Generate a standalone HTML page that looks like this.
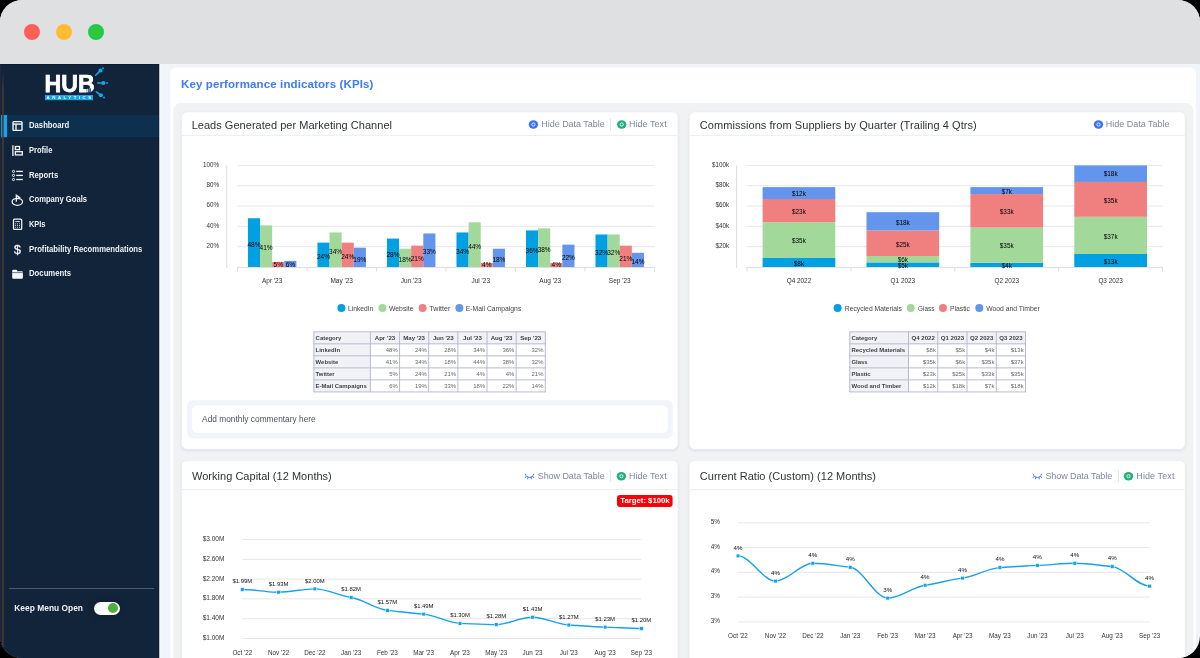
<!DOCTYPE html>
<html><head><meta charset="utf-8"><title>KPI Dashboard</title>
<style>
html,body{margin:0;padding:0}
body{width:1200px;height:658px;background:#000;overflow:hidden;position:relative;font-family:"Liberation Sans",sans-serif}
#win{will-change:transform;position:absolute;left:0;top:0;width:1200px;height:658px;border-radius:22px;overflow:hidden;background:#f1f4f8}
#win div{box-sizing:border-box}
.abs{position:absolute}
.card{position:absolute;background:#fff;border-radius:5.5px;box-shadow:0 0 0 0.6px rgba(30,40,80,.07),0 1px 2px rgba(16,24,40,.07),0 2px 5px rgba(16,24,40,.03)}
.hline{position:absolute;height:1px;background:#eceef1}
svg text{font-family:"Liberation Sans",sans-serif}
table.dt{position:absolute;border-collapse:collapse;table-layout:fixed;font-size:5.6px;color:#555}
table.dt td{border:1px solid #b9bdd3;padding:0 1.6px;height:11px;line-height:10px;text-align:right;overflow:hidden;white-space:nowrap;background:#fff}
table.dt td.h{background:#f1f2f5;font-weight:700;color:#444;text-align:center}
table.dt td.c{background:#f1f2f5;font-weight:700;color:#444;text-align:left}
</style></head><body><div id="win">

<div class="abs" style="left:0;top:0;width:1200px;height:64px;background:#dfe0e2"></div>
<div class="abs" style="left:24px;top:24px;width:16px;height:16px;border-radius:50%;background:#ff5f57"></div>
<div class="abs" style="left:56px;top:24px;width:16px;height:16px;border-radius:50%;background:#febc2e"></div>
<div class="abs" style="left:88px;top:24px;width:16px;height:16px;border-radius:50%;background:#28c840"></div>
<svg class="abs" style="left:0;top:0" width="1200" height="658" viewBox="0 0 1200 658"><rect x="0" y="64" width="159.5" height="600" fill="#07182a"/><rect x="0" y="64.5" width="158.7" height="600" fill="#11243a"/><rect x="159.5" y="64" width="0.8" height="600" fill="#fbfcfd"/><rect x="0" y="115" width="158.7" height="22.2" fill="#0d304e"/><rect x="0.5" y="115" width="6.5" height="22.2" fill="#12a5ea"/><rect x="0" y="64" width="1.1" height="600" fill="#1b2a3a"/><defs><linearGradient id="bl" x1="0" y1="0" x2="0" y2="1"><stop offset="0" stop-color="#11243a"/><stop offset="0.035" stop-color="#463a33"/><stop offset="1" stop-color="#463a33"/></linearGradient><filter id="sh" x="-5%" y="-5%" width="110%" height="115%"><feDropShadow dx="0" dy="1.2" stdDeviation="1.3" flood-color="#1a2238" flood-opacity="0.10"/></filter></defs><rect x="2.1" y="70" width="1.6" height="590" fill="url(#bl)"/><rect x="170.4" y="67.6" width="1025.6" height="640" rx="6" fill="#fff"/><rect x="173.3" y="103" width="1020.1" height="640" rx="7.5" fill="#f1f2f4"/><rect x="181.4" y="111.8" width="496.6" height="337.4" rx="5.5" fill="#fff" stroke="#e4e6ec" stroke-width="0.5" filter="url(#sh)"/><line x1="181.4" x2="678.0" y1="135.4" y2="135.4" stroke="#eceef1" stroke-width="1"/><rect x="689.2" y="111.8" width="495.9" height="337.4" rx="5.5" fill="#fff" stroke="#e4e6ec" stroke-width="0.5" filter="url(#sh)"/><line x1="689.2" x2="1185.1" y1="135.4" y2="135.4" stroke="#eceef1" stroke-width="1"/><rect x="181.4" y="460.5" width="496.6" height="230" rx="5.5" fill="#fff" stroke="#e4e6ec" stroke-width="0.5" filter="url(#sh)"/><line x1="181.4" x2="678.0" y1="489.5" y2="489.5" stroke="#eceef1" stroke-width="1"/><rect x="689.2" y="460.5" width="495.9" height="230" rx="5.5" fill="#fff" stroke="#e4e6ec" stroke-width="0.5" filter="url(#sh)"/><line x1="689.2" x2="1185.1" y1="489.5" y2="489.5" stroke="#eceef1" stroke-width="1"/><rect x="617" y="495" width="55.6" height="12" rx="3" fill="#fb0007"/><rect x="187" y="400.2" width="485.8" height="38.3" rx="6" fill="#f1f5f9"/><rect x="192" y="405.6" width="475.8" height="27.4" rx="5" fill="#fff"/></svg>
<div style="position:absolute;left:28.70px;top:119.28px;font-size:8.6px;line-height:12.04px;color:#eef2f6;font-weight:700;letter-spacing:0.000px;white-space:nowrap;transform:scaleX(0.8972);transform-origin:0 50%;">Dashboard</div>
<div style="position:absolute;left:28.70px;top:143.93px;font-size:8.6px;line-height:12.04px;color:#eef2f6;font-weight:700;letter-spacing:0.000px;white-space:nowrap;transform:scaleX(0.8744);transform-origin:0 50%;">Profile</div>
<div style="position:absolute;left:28.70px;top:168.58px;font-size:8.6px;line-height:12.04px;color:#eef2f6;font-weight:700;letter-spacing:0.000px;white-space:nowrap;transform:scaleX(0.8986);transform-origin:0 50%;">Reports</div>
<div style="position:absolute;left:28.70px;top:193.23px;font-size:8.6px;line-height:12.04px;color:#eef2f6;font-weight:700;letter-spacing:0.000px;white-space:nowrap;transform:scaleX(0.8874);transform-origin:0 50%;">Company Goals</div>
<div style="position:absolute;left:28.70px;top:217.88px;font-size:8.6px;line-height:12.04px;color:#eef2f6;font-weight:700;letter-spacing:0.000px;white-space:nowrap;transform:scaleX(0.8630);transform-origin:0 50%;">KPIs</div>
<div style="position:absolute;left:28.70px;top:242.53px;font-size:8.6px;line-height:12.04px;color:#eef2f6;font-weight:700;letter-spacing:0.000px;white-space:nowrap;transform:scaleX(0.8955);transform-origin:0 50%;">Profitability Recommendations</div>
<div style="position:absolute;left:28.70px;top:267.18px;font-size:8.6px;line-height:12.04px;color:#eef2f6;font-weight:700;letter-spacing:0.000px;white-space:nowrap;transform:scaleX(0.9011);transform-origin:0 50%;">Documents</div>
<div class="abs" style="left:9px;top:587.6px;width:145px;height:1px;background:#4a5a6c"></div>
<div style="position:absolute;left:14.30px;top:603.12px;font-size:8.4px;line-height:11.76px;color:#eef2f6;font-weight:700;letter-spacing:0.021px;white-space:nowrap;">Keep Menu Open</div>
<div class="abs" style="left:93.9px;top:601.6px;width:26px;height:13.4px;border-radius:7px;background:#fff;box-shadow:0 0 6px rgba(0,0,0,.25)"></div>
<div class="abs" style="left:108.2px;top:603.3px;width:10px;height:10px;border-radius:50%;background:#4caf3d"></div>
<div style="position:absolute;left:181.00px;top:76.25px;font-size:11.5px;line-height:16.1px;color:#3c7cf5;font-weight:700;letter-spacing:0.120px;white-space:nowrap;">Key performance indicators (KPIs)</div>
<div style="position:absolute;left:191.70px;top:117.60px;font-size:11px;line-height:15.4px;color:#2f3237;font-weight:400;letter-spacing:0.026px;white-space:nowrap;">Leads Generated per Marketing Channel</div>
<div style="position:absolute;left:699.80px;top:117.60px;font-size:11px;line-height:15.4px;color:#2f3237;font-weight:400;letter-spacing:0.054px;white-space:nowrap;">Commissions from Suppliers by Quarter (Trailing 4 Qtrs)</div>
<div style="position:absolute;left:192.00px;top:468.70px;font-size:11px;line-height:15.4px;color:#2f3237;font-weight:400;letter-spacing:0.023px;white-space:nowrap;">Working Capital (12 Months)</div>
<div style="position:absolute;left:699.80px;top:468.70px;font-size:11px;line-height:15.4px;color:#2f3237;font-weight:400;letter-spacing:0.022px;white-space:nowrap;">Current Ratio (Custom) (12 Months)</div>
<div style="position:absolute;left:541.30px;top:118.10px;font-size:9px;line-height:12.6px;color:#80879c;font-weight:400;letter-spacing:-0.032px;white-space:nowrap;">Hide Data Table</div>
<div class="abs" style="left:610.1px;top:118.2px;width:1px;height:12.4px;background:#e4e6ea"></div>
<div style="position:absolute;left:629.00px;top:118.10px;font-size:9px;line-height:12.6px;color:#80879c;font-weight:400;letter-spacing:0.038px;white-space:nowrap;">Hide Text</div>
<div style="position:absolute;left:1105.80px;top:118.10px;font-size:9px;line-height:12.6px;color:#80879c;font-weight:400;letter-spacing:-0.018px;white-space:nowrap;">Hide Data Table</div>
<div style="position:absolute;left:537.70px;top:469.70px;font-size:9px;line-height:12.6px;color:#80879c;font-weight:400;letter-spacing:-0.065px;white-space:nowrap;">Show Data Table</div>
<div class="abs" style="left:609.9px;top:469.8px;width:1px;height:12.4px;background:#e4e6ea"></div>
<div style="position:absolute;left:628.90px;top:469.70px;font-size:9px;line-height:12.6px;color:#80879c;font-weight:400;letter-spacing:0.050px;white-space:nowrap;">Hide Text</div>
<div style="position:absolute;left:1045.40px;top:469.70px;font-size:9px;line-height:12.6px;color:#80879c;font-weight:400;letter-spacing:-0.079px;white-space:nowrap;">Show Data Table</div>
<div class="abs" style="left:1117.6px;top:469.8px;width:1px;height:12.4px;background:#e4e6ea"></div>
<div style="position:absolute;left:1136.30px;top:469.70px;font-size:9px;line-height:12.6px;color:#80879c;font-weight:400;letter-spacing:0.094px;white-space:nowrap;">Hide Text</div>
<div style="position:absolute;left:620.30px;top:495.64px;font-size:7.8px;line-height:10.92px;color:#fff;font-weight:700;letter-spacing:-0.024px;white-space:nowrap;">Target: $100k</div>
<div style="position:absolute;left:202.10px;top:413.99px;font-size:8.3px;line-height:11.62px;color:#4a4f57;font-weight:400;letter-spacing:0.025px;white-space:nowrap;">Add monthly commentary here</div>
<svg class="abs" style="left:0;top:0" width="1200" height="658" viewBox="0 0 1200 658"><ellipse cx="533.4" cy="124.5" rx="4.7" ry="4.2" fill="#3b72f6"/><circle cx="533.4" cy="124.5" r="1.6" fill="none" stroke="#fff" stroke-width="0.85"/><ellipse cx="621.7" cy="124.5" rx="4.7" ry="4.2" fill="#21ae7b"/><circle cx="621.7" cy="124.5" r="1.6" fill="none" stroke="#fff" stroke-width="0.85"/><ellipse cx="1098.5" cy="124.5" rx="4.7" ry="4.2" fill="#3b72f6"/><circle cx="1098.5" cy="124.5" r="1.6" fill="none" stroke="#fff" stroke-width="0.85"/><g stroke="#3d74f7" stroke-width="0.95" fill="none" stroke-linecap="round"><path d="M525.30 474.20 C526.00 476.50 527.60 477.40 529.50 477.40 C531.40 477.40 533.00 476.50 533.70 474.20"/><path d="M526.30 476.40 l-1.1 1.3 M528.00 477.30 l-0.4 1.6 M531.00 477.30 l0.4 1.6 M532.70 476.40 l1.1 1.3"/></g><ellipse cx="621.4" cy="476.2" rx="4.7" ry="4.2" fill="#21ae7b"/><circle cx="621.4" cy="476.2" r="1.6" fill="none" stroke="#fff" stroke-width="0.85"/><g stroke="#3d74f7" stroke-width="0.95" fill="none" stroke-linecap="round"><path d="M1033.20 474.20 C1033.90 476.50 1035.50 477.40 1037.40 477.40 C1039.30 477.40 1040.90 476.50 1041.60 474.20"/><path d="M1034.20 476.40 l-1.1 1.3 M1035.90 477.30 l-0.4 1.6 M1038.90 477.30 l0.4 1.6 M1040.60 476.40 l1.1 1.3"/></g><ellipse cx="1128.5" cy="476.2" rx="4.7" ry="4.2" fill="#21ae7b"/><circle cx="1128.5" cy="476.2" r="1.6" fill="none" stroke="#fff" stroke-width="0.85"/><line x1="237.4" x2="654.5" y1="246.68" y2="246.68" stroke="#e7e7e7" stroke-width="1"/><text x="219.00" y="247.84" font-size="6.3" fill="#333" text-anchor="end">20%</text><line x1="237.4" x2="654.5" y1="226.36" y2="226.36" stroke="#e7e7e7" stroke-width="1"/><text x="219.00" y="227.52" font-size="6.3" fill="#333" text-anchor="end">40%</text><line x1="237.4" x2="654.5" y1="206.04" y2="206.04" stroke="#e7e7e7" stroke-width="1"/><text x="219.00" y="207.20" font-size="6.3" fill="#333" text-anchor="end">60%</text><line x1="237.4" x2="654.5" y1="185.72" y2="185.72" stroke="#e7e7e7" stroke-width="1"/><text x="219.00" y="186.88" font-size="6.3" fill="#333" text-anchor="end">80%</text><line x1="237.4" x2="654.5" y1="165.40" y2="165.40" stroke="#e7e7e7" stroke-width="1"/><text x="219.00" y="166.56" font-size="6.3" fill="#333" text-anchor="end">100%</text><line x1="226.8" x2="226.8" y1="165.4" y2="268.0" stroke="#dcdcdc" stroke-width="1"/><line x1="237.4" x2="654.5" y1="267.4" y2="267.4" stroke="#dcdcdc" stroke-width="1"/><line x1="237.40" x2="237.40" y1="267.0" y2="271.5" stroke="#dcdcdc" stroke-width="1"/><text x="272.16" y="283.03" font-size="6.5" fill="#333" text-anchor="middle">Apr '23</text><rect x="247.92" y="218.23" width="12.12" height="48.77" fill="#00a0e3"/><rect x="260.04" y="225.34" width="12.12" height="41.66" fill="#a2d99b"/><rect x="272.16" y="261.92" width="12.12" height="5.08" fill="#f08080"/><rect x="284.28" y="260.90" width="12.12" height="6.10" fill="#6495ed"/><line x1="306.92" x2="306.92" y1="267.0" y2="271.5" stroke="#dcdcdc" stroke-width="1"/><text x="341.68" y="283.03" font-size="6.5" fill="#333" text-anchor="middle">May '23</text><rect x="317.44" y="242.62" width="12.12" height="24.38" fill="#00a0e3"/><rect x="329.56" y="232.46" width="12.12" height="34.54" fill="#a2d99b"/><rect x="341.68" y="242.62" width="12.12" height="24.38" fill="#f08080"/><rect x="353.80" y="247.70" width="12.12" height="19.30" fill="#6495ed"/><line x1="376.43" x2="376.43" y1="267.0" y2="271.5" stroke="#dcdcdc" stroke-width="1"/><text x="411.19" y="283.03" font-size="6.5" fill="#333" text-anchor="middle">Jun '23</text><rect x="386.95" y="238.55" width="12.12" height="28.45" fill="#00a0e3"/><rect x="399.07" y="248.71" width="12.12" height="18.29" fill="#a2d99b"/><rect x="411.19" y="245.66" width="12.12" height="21.34" fill="#f08080"/><rect x="423.31" y="233.47" width="12.12" height="33.53" fill="#6495ed"/><line x1="445.95" x2="445.95" y1="267.0" y2="271.5" stroke="#dcdcdc" stroke-width="1"/><text x="480.71" y="283.03" font-size="6.5" fill="#333" text-anchor="middle">Jul '23</text><rect x="456.47" y="232.46" width="12.12" height="34.54" fill="#00a0e3"/><rect x="468.59" y="222.30" width="12.12" height="44.70" fill="#a2d99b"/><rect x="480.71" y="262.94" width="12.12" height="4.06" fill="#f08080"/><rect x="492.83" y="248.71" width="12.12" height="18.29" fill="#6495ed"/><line x1="515.47" x2="515.47" y1="267.0" y2="271.5" stroke="#dcdcdc" stroke-width="1"/><text x="550.23" y="283.03" font-size="6.5" fill="#333" text-anchor="middle">Aug '23</text><rect x="525.99" y="230.42" width="12.12" height="36.58" fill="#00a0e3"/><rect x="538.11" y="228.39" width="12.12" height="38.61" fill="#a2d99b"/><rect x="550.23" y="262.94" width="12.12" height="4.06" fill="#f08080"/><rect x="562.35" y="244.65" width="12.12" height="22.35" fill="#6495ed"/><line x1="584.98" x2="584.98" y1="267.0" y2="271.5" stroke="#dcdcdc" stroke-width="1"/><text x="619.74" y="283.03" font-size="6.5" fill="#333" text-anchor="middle">Sep '23</text><rect x="595.50" y="234.49" width="12.12" height="32.51" fill="#00a0e3"/><rect x="607.62" y="234.49" width="12.12" height="32.51" fill="#a2d99b"/><rect x="619.74" y="245.66" width="12.12" height="21.34" fill="#f08080"/><rect x="631.86" y="252.78" width="12.12" height="14.22" fill="#6495ed"/><text x="253.98" y="246.84" font-size="6.5" fill="#000" text-anchor="middle">48%</text><text x="266.10" y="250.40" font-size="6.5" fill="#000" text-anchor="middle">41%</text><text x="278.22" y="266.53" font-size="6.5" fill="#000" text-anchor="middle">5%</text><text x="290.34" y="266.53" font-size="6.5" fill="#000" text-anchor="middle">6%</text><text x="323.50" y="259.03" font-size="6.5" fill="#000" text-anchor="middle">24%</text><text x="335.62" y="253.96" font-size="6.5" fill="#000" text-anchor="middle">34%</text><text x="347.74" y="259.03" font-size="6.5" fill="#000" text-anchor="middle">24%</text><text x="359.86" y="261.57" font-size="6.5" fill="#000" text-anchor="middle">19%</text><text x="393.01" y="257.00" font-size="6.5" fill="#000" text-anchor="middle">28%</text><text x="405.13" y="262.08" font-size="6.5" fill="#000" text-anchor="middle">18%</text><text x="417.25" y="260.56" font-size="6.5" fill="#000" text-anchor="middle">21%</text><text x="429.37" y="254.46" font-size="6.5" fill="#000" text-anchor="middle">33%</text><text x="462.53" y="253.96" font-size="6.5" fill="#000" text-anchor="middle">34%</text><text x="474.65" y="248.88" font-size="6.5" fill="#000" text-anchor="middle">44%</text><text x="486.77" y="266.53" font-size="6.5" fill="#000" text-anchor="middle">4%</text><text x="498.89" y="262.08" font-size="6.5" fill="#000" text-anchor="middle">18%</text><text x="532.04" y="252.94" font-size="6.5" fill="#000" text-anchor="middle">36%</text><text x="544.16" y="251.92" font-size="6.5" fill="#000" text-anchor="middle">38%</text><text x="556.28" y="266.53" font-size="6.5" fill="#000" text-anchor="middle">4%</text><text x="568.40" y="260.05" font-size="6.5" fill="#000" text-anchor="middle">22%</text><text x="601.56" y="254.97" font-size="6.5" fill="#000" text-anchor="middle">32%</text><text x="613.68" y="254.97" font-size="6.5" fill="#000" text-anchor="middle">32%</text><text x="625.80" y="260.56" font-size="6.5" fill="#000" text-anchor="middle">21%</text><text x="637.92" y="264.11" font-size="6.5" fill="#000" text-anchor="middle">14%</text><line x1="654.5" x2="654.5" y1="267.0" y2="271.5" stroke="#dcdcdc" stroke-width="1"/><circle cx="341.4" cy="308.1" r="4" fill="#00a0e3"/><text x="348.00" y="310.60" font-size="6.7" fill="#444" text-anchor="start" textLength="25.30" lengthAdjust="spacingAndGlyphs">LinkedIn</text><circle cx="382.4" cy="308.1" r="4" fill="#a2d99b"/><text x="389.00" y="310.60" font-size="6.7" fill="#444" text-anchor="start" textLength="24.50" lengthAdjust="spacingAndGlyphs">Website</text><circle cx="422.6" cy="308.1" r="4" fill="#f08080"/><text x="429.30" y="310.60" font-size="6.7" fill="#444" text-anchor="start" textLength="21.00" lengthAdjust="spacingAndGlyphs">Twitter</text><circle cx="459.4" cy="308.1" r="4" fill="#6495ed"/><text x="465.80" y="310.60" font-size="6.7" fill="#444" text-anchor="start" textLength="55.50" lengthAdjust="spacingAndGlyphs">E-Mail Campaigns</text><line x1="747.0" x2="1162.6" y1="246.68" y2="246.68" stroke="#e7e7e7" stroke-width="1"/><text x="729.20" y="247.84" font-size="6.3" fill="#333" text-anchor="end">$20k</text><line x1="747.0" x2="1162.6" y1="226.36" y2="226.36" stroke="#e7e7e7" stroke-width="1"/><text x="729.20" y="227.52" font-size="6.3" fill="#333" text-anchor="end">$40k</text><line x1="747.0" x2="1162.6" y1="206.04" y2="206.04" stroke="#e7e7e7" stroke-width="1"/><text x="729.20" y="207.20" font-size="6.3" fill="#333" text-anchor="end">$60k</text><line x1="747.0" x2="1162.6" y1="185.72" y2="185.72" stroke="#e7e7e7" stroke-width="1"/><text x="729.20" y="186.88" font-size="6.3" fill="#333" text-anchor="end">$80k</text><line x1="747.0" x2="1162.6" y1="165.40" y2="165.40" stroke="#e7e7e7" stroke-width="1"/><text x="729.20" y="166.56" font-size="6.3" fill="#333" text-anchor="end">$100k</text><line x1="736.6" x2="736.6" y1="165.4" y2="268.0" stroke="#dcdcdc" stroke-width="1"/><line x1="747.0" x2="1162.6" y1="267.4" y2="267.4" stroke="#dcdcdc" stroke-width="1"/><line x1="747.00" x2="747.00" y1="267.0" y2="271.5" stroke="#dcdcdc" stroke-width="1"/><text x="798.95" y="282.99" font-size="6.4" fill="#333" text-anchor="middle">Q4 2022</text><rect x="762.60" y="258.00" width="72.70" height="9.00" fill="#00a0e3"/><rect x="762.60" y="222.30" width="72.70" height="35.70" fill="#a2d99b"/><rect x="762.60" y="199.00" width="72.70" height="23.30" fill="#f08080"/><rect x="762.60" y="187.10" width="72.70" height="11.90" fill="#6495ed"/><line x1="850.90" x2="850.90" y1="267.0" y2="271.5" stroke="#dcdcdc" stroke-width="1"/><text x="902.85" y="282.99" font-size="6.4" fill="#333" text-anchor="middle">Q1 2023</text><rect x="866.50" y="262.40" width="72.70" height="4.60" fill="#00a0e3"/><rect x="866.50" y="256.00" width="72.70" height="6.40" fill="#a2d99b"/><rect x="866.50" y="230.50" width="72.70" height="25.50" fill="#f08080"/><rect x="866.50" y="212.20" width="72.70" height="18.30" fill="#6495ed"/><line x1="954.80" x2="954.80" y1="267.0" y2="271.5" stroke="#dcdcdc" stroke-width="1"/><text x="1006.75" y="282.99" font-size="6.4" fill="#333" text-anchor="middle">Q2 2023</text><rect x="970.40" y="262.80" width="72.70" height="4.20" fill="#00a0e3"/><rect x="970.40" y="227.60" width="72.70" height="35.20" fill="#a2d99b"/><rect x="970.40" y="194.05" width="72.70" height="33.55" fill="#f08080"/><rect x="970.40" y="187.10" width="72.70" height="6.95" fill="#6495ed"/><line x1="1058.70" x2="1058.70" y1="267.0" y2="271.5" stroke="#dcdcdc" stroke-width="1"/><text x="1110.65" y="282.99" font-size="6.4" fill="#333" text-anchor="middle">Q3 2023</text><rect x="1074.30" y="254.00" width="72.70" height="13.00" fill="#00a0e3"/><rect x="1074.30" y="216.80" width="72.70" height="37.20" fill="#a2d99b"/><rect x="1074.30" y="181.95" width="72.70" height="34.85" fill="#f08080"/><rect x="1074.30" y="165.40" width="72.70" height="16.55" fill="#6495ed"/><line x1="1162.6" x2="1162.6" y1="267.0" y2="271.5" stroke="#dcdcdc" stroke-width="1"/><text x="798.95" y="265.79" font-size="6.4" fill="#000" text-anchor="middle">$8k</text><text x="798.95" y="243.44" font-size="6.4" fill="#000" text-anchor="middle">$35k</text><text x="798.95" y="213.94" font-size="6.4" fill="#000" text-anchor="middle">$23k</text><text x="798.95" y="196.34" font-size="6.4" fill="#000" text-anchor="middle">$12k</text><text x="902.85" y="267.99" font-size="6.4" fill="#000" text-anchor="middle">$5k</text><text x="902.85" y="262.49" font-size="6.4" fill="#000" text-anchor="middle">$6k</text><text x="902.85" y="246.54" font-size="6.4" fill="#000" text-anchor="middle">$25k</text><text x="902.85" y="224.64" font-size="6.4" fill="#000" text-anchor="middle">$18k</text><text x="1006.75" y="268.19" font-size="6.4" fill="#000" text-anchor="middle">$4k</text><text x="1006.75" y="248.49" font-size="6.4" fill="#000" text-anchor="middle">$35k</text><text x="1006.75" y="214.12" font-size="6.4" fill="#000" text-anchor="middle">$33k</text><text x="1006.75" y="193.87" font-size="6.4" fill="#000" text-anchor="middle">$7k</text><text x="1110.65" y="263.79" font-size="6.4" fill="#000" text-anchor="middle">$13k</text><text x="1110.65" y="238.69" font-size="6.4" fill="#000" text-anchor="middle">$37k</text><text x="1110.65" y="202.67" font-size="6.4" fill="#000" text-anchor="middle">$35k</text><text x="1110.65" y="176.07" font-size="6.4" fill="#000" text-anchor="middle">$18k</text><circle cx="837.6" cy="308.1" r="4" fill="#00a0e3"/><text x="844.80" y="310.60" font-size="6.7" fill="#444" text-anchor="start" textLength="57.20" lengthAdjust="spacingAndGlyphs">Recycled Materials</text><circle cx="910.8" cy="308.1" r="4" fill="#a2d99b"/><text x="918.00" y="310.60" font-size="6.7" fill="#444" text-anchor="start" textLength="16.40" lengthAdjust="spacingAndGlyphs">Glass</text><circle cx="943" cy="308.1" r="4" fill="#f08080"/><text x="950.00" y="310.60" font-size="6.7" fill="#444" text-anchor="start" textLength="19.90" lengthAdjust="spacingAndGlyphs">Plastic</text><circle cx="979.3" cy="308.1" r="4" fill="#6495ed"/><text x="986.20" y="310.60" font-size="6.7" fill="#444" text-anchor="start" textLength="53.60" lengthAdjust="spacingAndGlyphs">Wood and Timber</text><line x1="242.3" x2="641.4" y1="539.50" y2="539.50" stroke="#e7e7e7" stroke-width="1"/><text x="224.40" y="540.93" font-size="6.5" fill="#333" text-anchor="end">$3.00M</text><line x1="242.3" x2="641.4" y1="559.30" y2="559.30" stroke="#e7e7e7" stroke-width="1"/><text x="224.40" y="560.73" font-size="6.5" fill="#333" text-anchor="end">$2.60M</text><line x1="242.3" x2="641.4" y1="579.10" y2="579.10" stroke="#e7e7e7" stroke-width="1"/><text x="224.40" y="580.53" font-size="6.5" fill="#333" text-anchor="end">$2.20M</text><line x1="242.3" x2="641.4" y1="598.90" y2="598.90" stroke="#e7e7e7" stroke-width="1"/><text x="224.40" y="600.33" font-size="6.5" fill="#333" text-anchor="end">$1.80M</text><line x1="242.3" x2="641.4" y1="618.70" y2="618.70" stroke="#e7e7e7" stroke-width="1"/><text x="224.40" y="620.13" font-size="6.5" fill="#333" text-anchor="end">$1.40M</text><line x1="242.3" x2="641.4" y1="638.50" y2="638.50" stroke="#e7e7e7" stroke-width="1"/><text x="224.40" y="639.93" font-size="6.5" fill="#333" text-anchor="end">$1.00M</text><path d="M242.30 589.50 C254.39 589.50 266.49 592.20 278.58 592.20 C290.68 592.20 302.77 588.90 314.86 588.90 C326.96 588.90 339.05 595.71 351.15 597.50 C363.24 599.29 375.33 609.17 387.43 610.40 C399.52 611.63 411.62 613.02 423.71 614.10 C435.80 615.18 447.90 623.00 459.99 623.40 C472.08 623.80 484.18 624.60 496.27 624.60 C508.37 624.60 520.46 617.20 532.55 617.20 C544.65 617.20 556.74 624.30 568.84 625.00 C580.93 625.70 593.02 626.80 605.12 627.10 C617.21 627.40 629.31 628.60 641.40 628.60" fill="none" stroke="#18a2e6" stroke-width="1.4"/><rect x="240.45" y="587.65" width="3.7" height="3.7" fill="#18a2e6" stroke="#fff" stroke-width="0.5"/><text x="242.30" y="583.31" font-size="5.9" fill="#111" text-anchor="middle">$1.99M</text><text x="242.30" y="654.76" font-size="6.3" fill="#333" text-anchor="middle">Oct '22</text><rect x="276.73" y="590.35" width="3.7" height="3.7" fill="#18a2e6" stroke="#fff" stroke-width="0.5"/><text x="278.58" y="586.01" font-size="5.9" fill="#111" text-anchor="middle">$1.93M</text><text x="278.58" y="654.76" font-size="6.3" fill="#333" text-anchor="middle">Nov '22</text><rect x="313.01" y="587.05" width="3.7" height="3.7" fill="#18a2e6" stroke="#fff" stroke-width="0.5"/><text x="314.86" y="582.71" font-size="5.9" fill="#111" text-anchor="middle">$2.00M</text><text x="314.86" y="654.76" font-size="6.3" fill="#333" text-anchor="middle">Dec '22</text><rect x="349.30" y="595.65" width="3.7" height="3.7" fill="#18a2e6" stroke="#fff" stroke-width="0.5"/><text x="351.15" y="591.31" font-size="5.9" fill="#111" text-anchor="middle">$1.82M</text><text x="351.15" y="654.76" font-size="6.3" fill="#333" text-anchor="middle">Jan '23</text><rect x="385.58" y="608.55" width="3.7" height="3.7" fill="#18a2e6" stroke="#fff" stroke-width="0.5"/><text x="387.43" y="604.21" font-size="5.9" fill="#111" text-anchor="middle">$1.57M</text><text x="387.43" y="654.76" font-size="6.3" fill="#333" text-anchor="middle">Feb '23</text><rect x="421.86" y="612.25" width="3.7" height="3.7" fill="#18a2e6" stroke="#fff" stroke-width="0.5"/><text x="423.71" y="607.91" font-size="5.9" fill="#111" text-anchor="middle">$1.49M</text><text x="423.71" y="654.76" font-size="6.3" fill="#333" text-anchor="middle">Mar '23</text><rect x="458.14" y="621.55" width="3.7" height="3.7" fill="#18a2e6" stroke="#fff" stroke-width="0.5"/><text x="459.99" y="617.21" font-size="5.9" fill="#111" text-anchor="middle">$1.30M</text><text x="459.99" y="654.76" font-size="6.3" fill="#333" text-anchor="middle">Apr '23</text><rect x="494.42" y="622.75" width="3.7" height="3.7" fill="#18a2e6" stroke="#fff" stroke-width="0.5"/><text x="496.27" y="618.41" font-size="5.9" fill="#111" text-anchor="middle">$1.28M</text><text x="496.27" y="654.76" font-size="6.3" fill="#333" text-anchor="middle">May '23</text><rect x="530.70" y="615.35" width="3.7" height="3.7" fill="#18a2e6" stroke="#fff" stroke-width="0.5"/><text x="532.55" y="611.01" font-size="5.9" fill="#111" text-anchor="middle">$1.43M</text><text x="532.55" y="654.76" font-size="6.3" fill="#333" text-anchor="middle">Jun '23</text><rect x="566.99" y="623.15" width="3.7" height="3.7" fill="#18a2e6" stroke="#fff" stroke-width="0.5"/><text x="568.84" y="618.81" font-size="5.9" fill="#111" text-anchor="middle">$1.27M</text><text x="568.84" y="654.76" font-size="6.3" fill="#333" text-anchor="middle">Jul '23</text><rect x="603.27" y="625.25" width="3.7" height="3.7" fill="#18a2e6" stroke="#fff" stroke-width="0.5"/><text x="605.12" y="620.91" font-size="5.9" fill="#111" text-anchor="middle">$1.23M</text><text x="605.12" y="654.76" font-size="6.3" fill="#333" text-anchor="middle">Aug '23</text><rect x="639.55" y="626.75" width="3.7" height="3.7" fill="#18a2e6" stroke="#fff" stroke-width="0.5"/><text x="641.40" y="622.41" font-size="5.9" fill="#111" text-anchor="middle">$1.20M</text><text x="641.40" y="654.76" font-size="6.3" fill="#333" text-anchor="middle">Sep '23</text><line x1="738.0" x2="1149.6" y1="522.90" y2="522.90" stroke="#e7e7e7" stroke-width="1"/><text x="720.00" y="523.99" font-size="6.4" fill="#333" text-anchor="end">5%</text><line x1="738.0" x2="1149.6" y1="547.60" y2="547.60" stroke="#e7e7e7" stroke-width="1"/><text x="720.00" y="548.69" font-size="6.4" fill="#333" text-anchor="end">4%</text><line x1="738.0" x2="1149.6" y1="572.30" y2="572.30" stroke="#e7e7e7" stroke-width="1"/><text x="720.00" y="573.39" font-size="6.4" fill="#333" text-anchor="end">4%</text><line x1="738.0" x2="1149.6" y1="597.10" y2="597.10" stroke="#e7e7e7" stroke-width="1"/><text x="720.00" y="598.19" font-size="6.4" fill="#333" text-anchor="end">3%</text><line x1="738.0" x2="1149.6" y1="621.90" y2="621.90" stroke="#e7e7e7" stroke-width="1"/><text x="720.00" y="622.99" font-size="6.4" fill="#333" text-anchor="end">3%</text><path d="M738.00 555.90 C750.47 555.90 762.95 581.10 775.42 581.10 C787.89 581.10 800.36 563.30 812.84 563.30 C825.31 563.30 837.78 565.97 850.25 567.30 C862.73 568.63 875.20 598.10 887.67 598.10 C900.15 598.10 912.62 586.87 925.09 585.20 C937.56 583.53 950.04 579.57 962.51 578.10 C974.98 576.63 987.45 568.33 999.93 567.60 C1012.40 566.87 1024.87 565.76 1037.35 565.40 C1049.82 565.04 1062.29 563.30 1074.76 563.30 C1087.24 563.30 1099.71 565.50 1112.18 566.60 C1124.65 567.70 1137.13 586.10 1149.60 586.10" fill="none" stroke="#18a2e6" stroke-width="1.4"/><rect x="736.15" y="554.05" width="3.7" height="3.7" fill="#18a2e6" stroke="#fff" stroke-width="0.5"/><text x="738.00" y="549.72" font-size="6.2" fill="#111" text-anchor="middle">4%</text><text x="738.00" y="637.66" font-size="6.3" fill="#333" text-anchor="middle">Oct '22</text><rect x="773.57" y="579.25" width="3.7" height="3.7" fill="#18a2e6" stroke="#fff" stroke-width="0.5"/><text x="775.42" y="574.92" font-size="6.2" fill="#111" text-anchor="middle">4%</text><text x="775.42" y="637.66" font-size="6.3" fill="#333" text-anchor="middle">Nov '22</text><rect x="810.99" y="561.45" width="3.7" height="3.7" fill="#18a2e6" stroke="#fff" stroke-width="0.5"/><text x="812.84" y="557.12" font-size="6.2" fill="#111" text-anchor="middle">4%</text><text x="812.84" y="637.66" font-size="6.3" fill="#333" text-anchor="middle">Dec '22</text><rect x="848.40" y="565.45" width="3.7" height="3.7" fill="#18a2e6" stroke="#fff" stroke-width="0.5"/><text x="850.25" y="561.12" font-size="6.2" fill="#111" text-anchor="middle">4%</text><text x="850.25" y="637.66" font-size="6.3" fill="#333" text-anchor="middle">Jan '23</text><rect x="885.82" y="596.25" width="3.7" height="3.7" fill="#18a2e6" stroke="#fff" stroke-width="0.5"/><text x="887.67" y="591.92" font-size="6.2" fill="#111" text-anchor="middle">3%</text><text x="887.67" y="637.66" font-size="6.3" fill="#333" text-anchor="middle">Feb '23</text><rect x="923.24" y="583.35" width="3.7" height="3.7" fill="#18a2e6" stroke="#fff" stroke-width="0.5"/><text x="925.09" y="579.02" font-size="6.2" fill="#111" text-anchor="middle">4%</text><text x="925.09" y="637.66" font-size="6.3" fill="#333" text-anchor="middle">Mar '23</text><rect x="960.66" y="576.25" width="3.7" height="3.7" fill="#18a2e6" stroke="#fff" stroke-width="0.5"/><text x="962.51" y="571.92" font-size="6.2" fill="#111" text-anchor="middle">4%</text><text x="962.51" y="637.66" font-size="6.3" fill="#333" text-anchor="middle">Apr '23</text><rect x="998.08" y="565.75" width="3.7" height="3.7" fill="#18a2e6" stroke="#fff" stroke-width="0.5"/><text x="999.93" y="561.42" font-size="6.2" fill="#111" text-anchor="middle">4%</text><text x="999.93" y="637.66" font-size="6.3" fill="#333" text-anchor="middle">May '23</text><rect x="1035.50" y="563.55" width="3.7" height="3.7" fill="#18a2e6" stroke="#fff" stroke-width="0.5"/><text x="1037.35" y="559.22" font-size="6.2" fill="#111" text-anchor="middle">4%</text><text x="1037.35" y="637.66" font-size="6.3" fill="#333" text-anchor="middle">Jun '23</text><rect x="1072.91" y="561.45" width="3.7" height="3.7" fill="#18a2e6" stroke="#fff" stroke-width="0.5"/><text x="1074.76" y="557.12" font-size="6.2" fill="#111" text-anchor="middle">4%</text><text x="1074.76" y="637.66" font-size="6.3" fill="#333" text-anchor="middle">Jul '23</text><rect x="1110.33" y="564.75" width="3.7" height="3.7" fill="#18a2e6" stroke="#fff" stroke-width="0.5"/><text x="1112.18" y="560.42" font-size="6.2" fill="#111" text-anchor="middle">4%</text><text x="1112.18" y="637.66" font-size="6.3" fill="#333" text-anchor="middle">Aug '23</text><rect x="1147.75" y="584.25" width="3.7" height="3.7" fill="#18a2e6" stroke="#fff" stroke-width="0.5"/><text x="1149.60" y="579.92" font-size="6.2" fill="#111" text-anchor="middle">4%</text><text x="1149.60" y="637.66" font-size="6.3" fill="#333" text-anchor="middle">Sep '23</text><rect x="313.9" y="331.8" width="231.40" height="60.15" fill="#fff"/><rect x="313.9" y="331.8" width="231.40" height="12.03" fill="#f1f2f5"/><rect x="313.9" y="331.8" width="56.5" height="60.15" fill="#f1f2f5"/><line x1="313.4" x2="545.80" y1="331.80" y2="331.80" stroke="#b7bbd2" stroke-width="1"/><line x1="313.4" x2="545.80" y1="343.83" y2="343.83" stroke="#b7bbd2" stroke-width="1"/><line x1="313.4" x2="545.80" y1="355.86" y2="355.86" stroke="#b7bbd2" stroke-width="1"/><line x1="313.4" x2="545.80" y1="367.89" y2="367.89" stroke="#b7bbd2" stroke-width="1"/><line x1="313.4" x2="545.80" y1="379.92" y2="379.92" stroke="#b7bbd2" stroke-width="1"/><line x1="313.4" x2="545.80" y1="391.95" y2="391.95" stroke="#b7bbd2" stroke-width="1"/><line x1="313.90" x2="313.90" y1="331.8" y2="391.95" stroke="#b7bbd2" stroke-width="1"/><line x1="370.40" x2="370.40" y1="331.8" y2="391.95" stroke="#b7bbd2" stroke-width="1"/><line x1="399.55" x2="399.55" y1="331.8" y2="391.95" stroke="#b7bbd2" stroke-width="1"/><line x1="428.70" x2="428.70" y1="331.8" y2="391.95" stroke="#b7bbd2" stroke-width="1"/><line x1="457.85" x2="457.85" y1="331.8" y2="391.95" stroke="#b7bbd2" stroke-width="1"/><line x1="487.00" x2="487.00" y1="331.8" y2="391.95" stroke="#b7bbd2" stroke-width="1"/><line x1="516.15" x2="516.15" y1="331.8" y2="391.95" stroke="#b7bbd2" stroke-width="1"/><line x1="545.30" x2="545.30" y1="331.8" y2="391.95" stroke="#b7bbd2" stroke-width="1"/><text x="315.60" y="340.15" font-size="5.95" fill="#3f4247" text-anchor="start" font-weight="700">Category</text><text x="384.97" y="340.20" font-size="6.1" fill="#3f4247" text-anchor="middle" font-weight="700">Apr '23</text><text x="414.12" y="340.20" font-size="6.1" fill="#3f4247" text-anchor="middle" font-weight="700">May '23</text><text x="443.27" y="340.20" font-size="6.1" fill="#3f4247" text-anchor="middle" font-weight="700">Jun '23</text><text x="472.42" y="340.20" font-size="6.1" fill="#3f4247" text-anchor="middle" font-weight="700">Jul '23</text><text x="501.57" y="340.20" font-size="6.1" fill="#3f4247" text-anchor="middle" font-weight="700">Aug '23</text><text x="530.72" y="340.20" font-size="6.1" fill="#3f4247" text-anchor="middle" font-weight="700">Sep '23</text><text x="315.60" y="352.18" font-size="5.95" fill="#3f4247" text-anchor="start" font-weight="700">LinkedIn</text><text x="397.65" y="352.16" font-size="5.9" fill="#666" text-anchor="end">48%</text><text x="426.80" y="352.16" font-size="5.9" fill="#666" text-anchor="end">24%</text><text x="455.95" y="352.16" font-size="5.9" fill="#666" text-anchor="end">28%</text><text x="485.10" y="352.16" font-size="5.9" fill="#666" text-anchor="end">34%</text><text x="514.25" y="352.16" font-size="5.9" fill="#666" text-anchor="end">36%</text><text x="543.40" y="352.16" font-size="5.9" fill="#666" text-anchor="end">32%</text><text x="315.60" y="364.21" font-size="5.95" fill="#3f4247" text-anchor="start" font-weight="700">Website</text><text x="397.65" y="364.19" font-size="5.9" fill="#666" text-anchor="end">41%</text><text x="426.80" y="364.19" font-size="5.9" fill="#666" text-anchor="end">34%</text><text x="455.95" y="364.19" font-size="5.9" fill="#666" text-anchor="end">18%</text><text x="485.10" y="364.19" font-size="5.9" fill="#666" text-anchor="end">44%</text><text x="514.25" y="364.19" font-size="5.9" fill="#666" text-anchor="end">38%</text><text x="543.40" y="364.19" font-size="5.9" fill="#666" text-anchor="end">32%</text><text x="315.60" y="376.24" font-size="5.95" fill="#3f4247" text-anchor="start" font-weight="700">Twitter</text><text x="397.65" y="376.22" font-size="5.9" fill="#666" text-anchor="end">5%</text><text x="426.80" y="376.22" font-size="5.9" fill="#666" text-anchor="end">24%</text><text x="455.95" y="376.22" font-size="5.9" fill="#666" text-anchor="end">21%</text><text x="485.10" y="376.22" font-size="5.9" fill="#666" text-anchor="end">4%</text><text x="514.25" y="376.22" font-size="5.9" fill="#666" text-anchor="end">4%</text><text x="543.40" y="376.22" font-size="5.9" fill="#666" text-anchor="end">21%</text><text x="315.60" y="388.27" font-size="5.95" fill="#3f4247" text-anchor="start" font-weight="700">E-Mail Campaigns</text><text x="397.65" y="388.25" font-size="5.9" fill="#666" text-anchor="end">6%</text><text x="426.80" y="388.25" font-size="5.9" fill="#666" text-anchor="end">19%</text><text x="455.95" y="388.25" font-size="5.9" fill="#666" text-anchor="end">33%</text><text x="485.10" y="388.25" font-size="5.9" fill="#666" text-anchor="end">18%</text><text x="514.25" y="388.25" font-size="5.9" fill="#666" text-anchor="end">22%</text><text x="543.40" y="388.25" font-size="5.9" fill="#666" text-anchor="end">14%</text><rect x="849.8" y="331.8" width="175.70" height="60.15" fill="#fff"/><rect x="849.8" y="331.8" width="175.70" height="12.03" fill="#f1f2f5"/><rect x="849.8" y="331.8" width="58.7" height="60.15" fill="#f1f2f5"/><line x1="849.3" x2="1026.00" y1="331.80" y2="331.80" stroke="#b7bbd2" stroke-width="1"/><line x1="849.3" x2="1026.00" y1="343.83" y2="343.83" stroke="#b7bbd2" stroke-width="1"/><line x1="849.3" x2="1026.00" y1="355.86" y2="355.86" stroke="#b7bbd2" stroke-width="1"/><line x1="849.3" x2="1026.00" y1="367.89" y2="367.89" stroke="#b7bbd2" stroke-width="1"/><line x1="849.3" x2="1026.00" y1="379.92" y2="379.92" stroke="#b7bbd2" stroke-width="1"/><line x1="849.3" x2="1026.00" y1="391.95" y2="391.95" stroke="#b7bbd2" stroke-width="1"/><line x1="849.80" x2="849.80" y1="331.8" y2="391.95" stroke="#b7bbd2" stroke-width="1"/><line x1="908.50" x2="908.50" y1="331.8" y2="391.95" stroke="#b7bbd2" stroke-width="1"/><line x1="937.75" x2="937.75" y1="331.8" y2="391.95" stroke="#b7bbd2" stroke-width="1"/><line x1="967.00" x2="967.00" y1="331.8" y2="391.95" stroke="#b7bbd2" stroke-width="1"/><line x1="996.25" x2="996.25" y1="331.8" y2="391.95" stroke="#b7bbd2" stroke-width="1"/><line x1="1025.50" x2="1025.50" y1="331.8" y2="391.95" stroke="#b7bbd2" stroke-width="1"/><text x="851.50" y="340.15" font-size="5.95" fill="#3f4247" text-anchor="start" font-weight="700">Category</text><text x="923.12" y="340.20" font-size="6.1" fill="#3f4247" text-anchor="middle" font-weight="700">Q4 2022</text><text x="952.38" y="340.20" font-size="6.1" fill="#3f4247" text-anchor="middle" font-weight="700">Q1 2023</text><text x="981.62" y="340.20" font-size="6.1" fill="#3f4247" text-anchor="middle" font-weight="700">Q2 2023</text><text x="1010.88" y="340.20" font-size="6.1" fill="#3f4247" text-anchor="middle" font-weight="700">Q3 2023</text><text x="851.50" y="352.18" font-size="5.95" fill="#3f4247" text-anchor="start" font-weight="700">Recycled Materials</text><text x="935.85" y="352.16" font-size="5.9" fill="#666" text-anchor="end">$8k</text><text x="965.10" y="352.16" font-size="5.9" fill="#666" text-anchor="end">$5k</text><text x="994.35" y="352.16" font-size="5.9" fill="#666" text-anchor="end">$4k</text><text x="1023.60" y="352.16" font-size="5.9" fill="#666" text-anchor="end">$13k</text><text x="851.50" y="364.21" font-size="5.95" fill="#3f4247" text-anchor="start" font-weight="700">Glass</text><text x="935.85" y="364.19" font-size="5.9" fill="#666" text-anchor="end">$35k</text><text x="965.10" y="364.19" font-size="5.9" fill="#666" text-anchor="end">$6k</text><text x="994.35" y="364.19" font-size="5.9" fill="#666" text-anchor="end">$35k</text><text x="1023.60" y="364.19" font-size="5.9" fill="#666" text-anchor="end">$37k</text><text x="851.50" y="376.24" font-size="5.95" fill="#3f4247" text-anchor="start" font-weight="700">Plastic</text><text x="935.85" y="376.22" font-size="5.9" fill="#666" text-anchor="end">$23k</text><text x="965.10" y="376.22" font-size="5.9" fill="#666" text-anchor="end">$25k</text><text x="994.35" y="376.22" font-size="5.9" fill="#666" text-anchor="end">$33k</text><text x="1023.60" y="376.22" font-size="5.9" fill="#666" text-anchor="end">$35k</text><text x="851.50" y="388.27" font-size="5.95" fill="#3f4247" text-anchor="start" font-weight="700">Wood and Timber</text><text x="935.85" y="388.25" font-size="5.9" fill="#666" text-anchor="end">$12k</text><text x="965.10" y="388.25" font-size="5.9" fill="#666" text-anchor="end">$18k</text><text x="994.35" y="388.25" font-size="5.9" fill="#666" text-anchor="end">$7k</text><text x="1023.60" y="388.25" font-size="5.9" fill="#666" text-anchor="end">$18k</text><text x="44.6" y="92.35" font-size="24.3" font-weight="700" fill="#fff" stroke="#fff" stroke-width="0.75" stroke-linejoin="miter" textLength="50.2" lengthAdjust="spacingAndGlyphs">HUB</text><rect x="45" y="95" width="48" height="5.2" fill="#17a5ea"/><text x="46.6" y="99.4" font-size="4.4" font-weight="700" fill="#fff" textLength="44.6" lengthAdjust="spacing">ANALYTICS</text><rect x="86.7" y="88.3" width="4.2" height="4.6" fill="#11243a"/><rect x="87.2" y="88.8" width="1.1" height="3.6" fill="#fff"/><rect x="89.2" y="88.2" width="1.2" height="4.2" fill="#17a5ea"/><g stroke="#17a5ea" stroke-width="1.55" stroke-linecap="round" fill="#17a5ea"><line x1="95.7" y1="75.2" x2="100.4" y2="70.6"/><line x1="97.8" y1="83" x2="103.2" y2="83"/><line x1="96.3" y1="91.8" x2="100.7" y2="95.2"/></g><g fill="#17a5ea"><circle cx="100.5" cy="70.5" r="2.05"/><circle cx="103" cy="68.3" r="0.95"/><circle cx="103.4" cy="83" r="2.05"/><circle cx="107.1" cy="83" r="0.95"/><circle cx="100.9" cy="95.3" r="2.05"/><circle cx="104" cy="97.5" r="0.95"/></g><g fill="none" stroke="#f4f6f9" stroke-width="1.4"><rect x="13" y="121.6" width="9" height="8.8" rx="0.8"/><line x1="13" y1="124.1" x2="22" y2="124.1"/><line x1="16" y1="124.1" x2="16" y2="130.4"/></g><g fill="none" stroke="#f4f6f9" stroke-width="1.3"><line x1="12.9" y1="145.3" x2="12.9" y2="156"/><rect x="15.4" y="146.5" width="4.1" height="3.1"/><rect x="15.4" y="151.7" width="6.9" height="3.2"/></g><circle cx="13.5" cy="171.4" r="1.1" fill="none" stroke="#f4f6f9" stroke-width="0.95"/><line x1="16.2" y1="171.4" x2="22.9" y2="171.4" stroke="#f4f6f9" stroke-width="1.3"/><circle cx="13.5" cy="175.4" r="1.1" fill="none" stroke="#f4f6f9" stroke-width="0.95"/><line x1="16.2" y1="175.4" x2="22.9" y2="175.4" stroke="#f4f6f9" stroke-width="1.3"/><circle cx="13.5" cy="179.5" r="1.1" fill="none" stroke="#f4f6f9" stroke-width="0.95"/><line x1="16.2" y1="179.5" x2="22.9" y2="179.5" stroke="#f4f6f9" stroke-width="1.3"/><g fill="none" stroke="#f4f6f9" stroke-width="1.25"><ellipse cx="17.3" cy="201.8" rx="5.2" ry="3.5"/><path d="M16.3 201.8 V195.2 L19.6 197.4 L16.3 199.2"/></g><rect x="13.5" y="219.2" width="8.2" height="10.2" rx="1" fill="none" stroke="#f4f6f9" stroke-width="1.25"/><line x1="15.3" y1="221.6" x2="19.9" y2="221.6" stroke="#f4f6f9" stroke-width="0.9"/><rect x="15.20" y="223.40" width="0.9" height="0.9" fill="#f4f6f9"/><rect x="17.10" y="223.40" width="0.9" height="0.9" fill="#f4f6f9"/><rect x="19.00" y="223.40" width="0.9" height="0.9" fill="#f4f6f9"/><rect x="15.20" y="225.10" width="0.9" height="0.9" fill="#f4f6f9"/><rect x="17.10" y="225.10" width="0.9" height="0.9" fill="#f4f6f9"/><rect x="19.00" y="225.10" width="0.9" height="0.9" fill="#f4f6f9"/><rect x="15.20" y="226.80" width="0.9" height="0.9" fill="#f4f6f9"/><rect x="17.10" y="226.80" width="0.9" height="0.9" fill="#f4f6f9"/><rect x="19.00" y="226.80" width="0.9" height="0.9" fill="#f4f6f9"/><text x="17.5" y="253.5" font-size="12.4" fill="#f4f6f9" stroke="#f4f6f9" stroke-width="0.3" text-anchor="middle">$</text><path d="M12.2 271 q0 -1.2 1.2 -1.2 h3 l1.2 1.4 h4.3 q1 0 1 1 v5.6 q0 1 -1 1 h-8.7 q-1 0 -1 -1 z" fill="#f4f6f9"/><path d="M12.2 272.6 h10.7" stroke="#11243a" stroke-width="0.6"/></svg>
</div></body></html>
